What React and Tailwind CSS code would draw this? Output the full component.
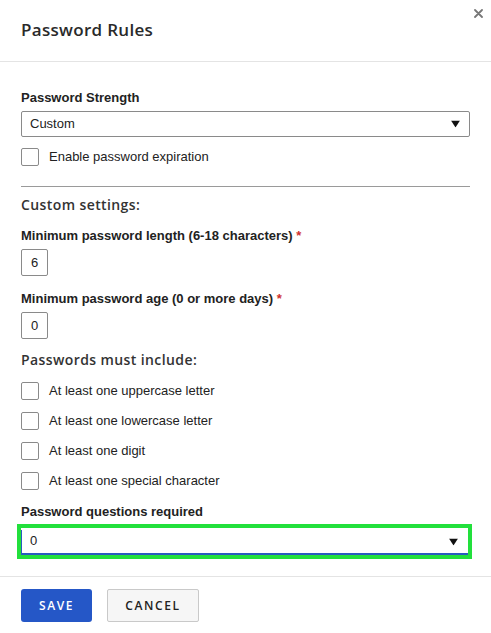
import { useState } from 'react'

const body = { fontFamily: '"Liberation Sans", Arial, sans-serif' }
const heading = { fontFamily: '"Open Sans", "Noto Sans", sans-serif' }

function Caret() {
  return (
    <svg className="pointer-events-none absolute right-[10px] top-1/2 -translate-y-1/2" width="9" height="7" viewBox="0 0 9 7">
      <path d="M0 0 L9 0 L4.5 7 Z" fill="#111" />
    </svg>
  )
}

function Checkbox({ label, checked, onChange }) {
  return (
    <label className="flex items-center h-[18px] cursor-pointer">
      <input
        type="checkbox"
        checked={checked}
        onChange={onChange}
        className="appearance-none w-[18px] h-[18px] border border-[#8a8a8a] rounded-[2px] bg-white checked:bg-[#2557c7] m-0"
      />
      <span className="ml-[10px] text-[13px] text-[#222]">{label}</span>
    </label>
  )
}

export default function App() {
  const [strength, setStrength] = useState('custom')
  const [expire, setExpire] = useState(false)
  const [minLength, setMinLength] = useState('6')
  const [minAge, setMinAge] = useState('0')
  const [questions, setQuestions] = useState('0')
  const [rules, setRules] = useState({ upper: false, lower: false, digit: false, special: false })

  const toggle = key => setRules(prev => ({ ...prev, [key]: !prev[key] }))

  return (
    <div className="relative w-[491px] h-[633px] bg-white overflow-hidden" style={body}>
      {/* Header */}
      <div className="h-[62px] px-[21px] flex items-center border-b border-[#e4e4e4]">
        <h1 className="text-[17px] font-semibold text-[#2a2a2a] tracking-[0.3px] -mt-[2px]" style={heading}>
          Password Rules
        </h1>
      </div>
      <button className="absolute top-[6px] right-[6px] w-[14px] h-[14px] flex items-center justify-center">
        <svg width="9" height="9" viewBox="0 0 9 9">
          <path d="M1 1 L8 8 M8 1 L1 8" stroke="#777" strokeWidth="1.8" strokeLinecap="round" />
        </svg>
      </button>

      {/* Body */}
      <div className="px-[21px] pt-[28px] pb-[21px] border-b border-[#e4e4e4]">
        <div className="text-[13px] leading-[16px] font-bold text-[#222]">Password Strength</div>
        <div className="relative mt-[5px] w-[449px]">
          <select
            value={strength}
            onChange={e => setStrength(e.target.value)}
            className="appearance-none w-full h-[26px] border border-[#8a8a8a] rounded-[2px] bg-white pl-[8px] text-[13px] text-[#222] outline-none"
          >
            <option value="custom">Custom</option>
            <option value="low">Low</option>
            <option value="medium">Medium</option>
            <option value="high">High</option>
          </select>
          <Caret />
        </div>
        <div className="mt-[11px]">
          <Checkbox label="Enable password expiration" checked={expire} onChange={() => setExpire(!expire)} />
        </div>

        <hr className="mt-[20px] border-0 border-t border-[#9a9a9a] w-[449px]" />

        <div className="mt-[9px] text-[14px] leading-[18px] font-semibold text-[#333] tracking-[0.4px]" style={heading}>
          Custom settings:
        </div>

        <div className="mt-[14px] text-[13px] leading-[16px] font-bold text-[#222]">
          Minimum password length (6-18 characters) <span className="text-[#d0312f]">*</span>
        </div>
        <input
          value={minLength}
          onChange={e => setMinLength(e.target.value)}
          className="mt-[5px] block w-[27px] h-[27px] border border-[#8a8a8a] rounded-[2px] text-[13px] text-[#222] text-center outline-none"
        />

        <div className="mt-[15px] text-[13px] leading-[16px] font-bold text-[#222]">
          Minimum password age (0 or more days) <span className="text-[#d0312f]">*</span>
        </div>
        <input
          value={minAge}
          onChange={e => setMinAge(e.target.value)}
          className="mt-[5px] block w-[27px] h-[27px] border border-[#8a8a8a] rounded-[2px] text-[13px] text-[#222] text-center outline-none"
        />

        <div className="mt-[12px] text-[14px] leading-[18px] font-semibold text-[#333] tracking-[0.4px]" style={heading}>
          Passwords must include:
        </div>
        <div className="mt-[13px] flex flex-col gap-[12px]">
          <Checkbox label="At least one uppercase letter" checked={rules.upper} onChange={() => toggle('upper')} />
          <Checkbox label="At least one lowercase letter" checked={rules.lower} onChange={() => toggle('lower')} />
          <Checkbox label="At least one digit" checked={rules.digit} onChange={() => toggle('digit')} />
          <Checkbox label="At least one special character" checked={rules.special} onChange={() => toggle('special')} />
        </div>

        <div className="mt-[14px] text-[13px] leading-[16px] font-bold text-[#222]">Password questions required</div>
        <div className="relative mt-[8px] w-[447px] outline-4 outline-solid outline-[#22e03c]">
          <select
            value={questions}
            onChange={e => setQuestions(e.target.value)}
            className="appearance-none w-full h-[25px] border-l border-b-2 border-[#2a5bbf] bg-white pl-[8px] pb-[2px] text-[13px] text-[#222] outline-none rounded-none"
          >
            <option value="0">0</option>
            <option value="1">1</option>
            <option value="2">2</option>
            <option value="3">3</option>
          </select>
          <Caret />
        </div>
      </div>

      {/* Footer */}
      <div className="px-[21px] pt-[12px] flex gap-[15px]" style={heading}>
        <button className="w-[71px] h-[33px] rounded-[3px] bg-[#2557c7] text-white text-[12px] font-semibold tracking-[1.6px]">
          SAVE
        </button>
        <button className="w-[92px] h-[33px] rounded-[2px] bg-[#f6f6f6] border border-[#c9c9c9] text-[#222] text-[12px] font-semibold tracking-[1.6px]">
          CANCEL
        </button>
      </div>
    </div>
  )
}
